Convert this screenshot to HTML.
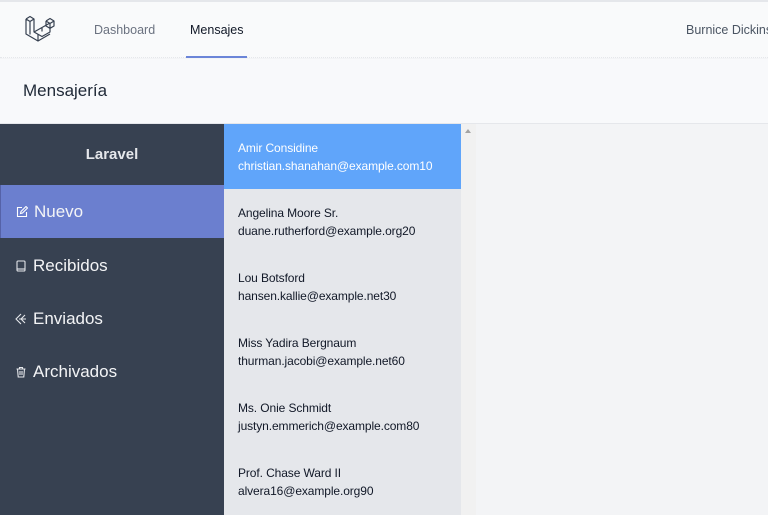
<!DOCTYPE html>
<html><head><meta charset="utf-8"><style>
*{box-sizing:border-box;margin:0;padding:0}
body{width:768px;height:515px;overflow:hidden;font-family:"Liberation Sans",sans-serif;background:#f3f4f6;position:relative}
.top{position:absolute;left:0;top:0;width:768px;height:2px;background:#e5e7eb}
.nav{position:absolute;left:0;top:2px;width:768px;height:56px;background:#f9fafb;border-bottom:1px dotted #e5e7eb}
.nav a{position:absolute;top:21px;font-size:12.5px;color:#6b7280}
.hdr{position:absolute;left:0;top:59px;width:768px;height:65px;background:#f8f9fb;border-bottom:1px solid #e5e7eb}
.side{position:absolute;left:0;top:124px;width:224px;height:391px;background:#374151;color:#fff}
.side .t{position:absolute;left:0;width:224px;text-align:center;top:22px;font-size:15px;font-weight:bold;color:#e5e7eb}
.item{position:absolute;left:0;width:224px;height:53px;font-size:17px;color:#f3f4f6;padding-left:33px;line-height:53px}
.item svg{position:absolute;left:15px;top:21px}
.list{position:absolute;left:224px;top:124px;width:237px;height:391px;background:#e5e7eb}
.m{height:65px;padding:15px 0 0 14px;font-size:12px;line-height:18px;color:#111827;letter-spacing:-0.1px}
.m.a{background:#60a5fa;color:#fff}
.sb{position:absolute;left:461px;top:124px;width:15px;height:391px;background:#f1f1f1}
.pane{position:absolute;left:476px;top:125px;width:292px;height:390px;background:#f3f4f6}
</style></head><body>
<div class="top"></div>
<div class="nav">
<svg style="position:absolute;left:25px;top:13px" width="30" height="30" viewBox="0 0 30 30" fill="none" stroke="#374151" stroke-width="1.2" stroke-linejoin="round"><path d="M1 4l4-2.5L9 4v13l8 4.5 8-4.5v-5"/><path d="M1 4v15l12 7 12-7M1 4l4 2.5L9 4M5 6.5v13M9 17l8-4.5 8-4.5M17 12.5v4M13 26v-6.5M21 6l4-2.5L29 6v5l-4 2.3M21 6v5l4 2.3M21 6l4 2.5L29 6M25 8.5v4.8"/></svg>
<a style="left:94px">Dashboard</a>
<a style="left:190px;color:#111827">Mensajes</a>
<div style="position:absolute;left:186px;top:54px;width:61px;height:2px;background:#6b85d8"></div>
<a style="left:686px;color:#4b5563;white-space:nowrap">Burnice Dickinson</a>
</div>
<div class="hdr"><div style="position:absolute;left:23px;top:22px;font-size:17px;color:#1f2937">Mensajería</div></div>
<div class="side">
<div class="t">Laravel</div>
<div class="item" style="top:61px;background:#6b7fcf;border-left:1px solid #5562a8"><svg width="12" height="12" viewBox="0 0 12 12" fill="none" stroke="#fff" stroke-width="1.1"><path d="M6 1.5H1.5v9h9V6"/><path d="M4.5 7.5l.5-2 5-5 1.5 1.5-5 5z"/></svg>Nuevo</div>
<div class="item" style="top:115px"><svg width="12" height="12" viewBox="0 0 12 12" fill="none" stroke="#e5e7eb" stroke-width="1.1"><rect x="2" y="1" width="8" height="10" rx="1"/><path d="M2 9h8"/></svg>Recibidos</div>
<div class="item" style="top:168px"><svg width="12" height="12" viewBox="0 0 12 12" fill="none" stroke="#e5e7eb" stroke-width="1.1"><path d="M6 1L1 6l5 5M10 2L6 6l4 4M4 6h7"/></svg>Enviados</div>
<div class="item" style="top:221px"><svg width="12" height="12" viewBox="0 0 12 12" fill="none" stroke="#e5e7eb" stroke-width="1.1"><path d="M1.5 3h9M4.5 3V1.5h3V3M2.5 3l.7 8h5.6l.7-8M5 5v4M7 5v4"/></svg>Archivados</div>
</div>
<div class="list">
<div class="m a">Amir Considine<br>christian.shanahan@example.com10</div>
<div class="m">Angelina Moore Sr.<br>duane.rutherford@example.org20</div>
<div class="m">Lou Botsford<br>hansen.kallie@example.net30</div>
<div class="m">Miss Yadira Bergnaum<br>thurman.jacobi@example.net60</div>
<div class="m">Ms. Onie Schmidt<br>justyn.emmerich@example.com80</div>
<div class="m">Prof. Chase Ward II<br>alvera16@example.org90</div>
</div>
<div class="sb"><div style="position:absolute;left:4px;top:5px;width:0;height:0;border-left:3.5px solid transparent;border-right:3.5px solid transparent;border-bottom:4px solid #a3a3a3"></div></div>
<div class="pane"></div>
</body></html>
